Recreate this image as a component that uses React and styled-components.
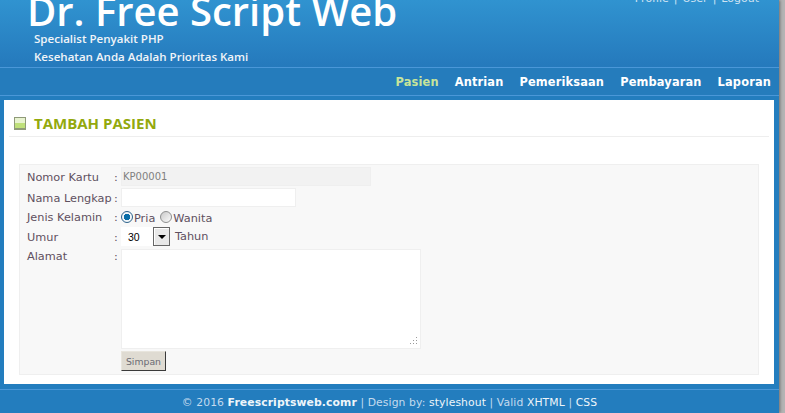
import React from "react";
import styled, { createGlobalStyle } from "styled-components";

const Global = createGlobalStyle`
  html, body { margin: 0; padding: 0; height: 413px; overflow: hidden; background: #b4b4b4; }
  body { font-family: "DejaVu Sans", Verdana, sans-serif; font-size: 11.3px; color: #5a4a5a; }
`;
const Page = styled.div`
  width: 779px; height: 413px; overflow: hidden; background: #237dbe;
  box-shadow: 1px 0 3px rgba(0,0,0,.4); display: flex; flex-direction: column;
`;
const Header = styled.header`
  height: 67px; flex: none; display: flex; justify-content: space-between;
  background: linear-gradient(#3093d0, #2579bc);
  border-bottom: 1px solid #4a97d8; overflow: hidden;
`;
const Brand = styled.div`
  padding-left: 27px; display: flex; flex-direction: column;
`;
const Title = styled.h1`
  margin: -9px 0 0; font: 600 40px/39px "Open Sans", sans-serif; color: #fff; white-space: nowrap;
`;
const Slogan = styled.div`
  margin-left: 7px; font: 600 11.55px/18px "Open Sans", sans-serif; color: #f0f4f8; white-space: nowrap;
`;
const TopLinks = styled.div`
  margin-top: -8px; padding-right: 20px; font-size: 11px; line-height: 14px; color: #cfe3f3; white-space: pre; word-spacing: -1px;
`;
const Nav = styled.nav`
  height: 27px; flex: none; display: flex; justify-content: flex-end; align-items: center; gap: 16px;
  padding-right: 8px; background: #257cbc; border-bottom: 1px solid #4a97d8;
`;
const NavLink = styled.a`
  font-weight: bold; font-size: 11.4px; letter-spacing: .15px; color: ${p => (p.$active ? "#c8e49a" : "#fff")};
`;
const Main = styled.main`
  margin: 4px 5px 0 4px; height: 284px; flex: none; background: #fff; padding: 0 5px; box-sizing: border-box;
  display: flex; flex-direction: column;
`;
const Heading = styled.h2`
  margin: 0; height: 37px; flex: none; box-sizing: border-box; display: flex; align-items: center; gap: 8px;
  padding: 10px 0 0 5px; border-bottom: 1px solid #eee;
  font: bold 15px "Open Sans", sans-serif; color: #93a90d; white-space: nowrap;
`;
const Bullet = styled.i`
  width: 12px; height: 13px; box-sizing: border-box; border: 1px solid #8f9a78; border-bottom-width: 2px;
  background: linear-gradient(#e8f3d0 50%, #bfe07a 50%);
`;
const Panel = styled.form`
  margin: 27px 10px 0; height: 211px; box-sizing: border-box; background: #f8f8f8; border: 1px solid #efefef;
  padding: 2px 0 0 7px; display: grid; grid-template-columns: 87px 7px 1fr; align-content: start;
  line-height: 14px;
`;
const Label = styled.label`
  align-self: start; padding-top: ${p => p.$pt ?? 4}px; color: #5f5060; white-space: nowrap;
`;
const Colon = styled.span`
  align-self: start; padding-top: ${p => p.$pt ?? 4}px; color: #5f5060;
`;
const Field = styled.div`
  display: flex; align-items: center; height: ${p => p.$h || 19}px; margin-bottom: ${p => p.$mb ?? 2}px;
`;
const TextBox = styled.div`
  width: ${p => p.$w}px; height: 19px; box-sizing: border-box; border: 1px solid #efefef; padding-left: 1px;
  background: ${p => (p.$off ? "#f2f2f2" : "#fff")}; color: #808080; font-size: 10px; line-height: 18px;
`;
const Radio = styled.span`
  width: 12px; height: 12px; box-sizing: border-box; border-radius: 50%; border: 1px solid ${p => (p.$on ? "#2c628b" : "#8e8f8f")};
  background: ${p => (p.$on ? "radial-gradient(circle, #0a6ea8 0 3px, #f2f6f9 3.5px)" : "linear-gradient(135deg, #c9c9c9, #fbfbfb)")};
  flex: none; margin: -2px 1px 0 ${p => p.$ml || 0}px;
`;
const Option = styled.span`
  margin-top: 1px; color: #5f5060;
`;
const Select = styled.div`
  width: 49px; height: 19px; display: flex; align-items: center; justify-content: space-between; padding-left: 7px; box-sizing: border-box;
  background: #fff; color: #000; font: 10.5px "Liberation Sans", sans-serif;
`;
const Arrow = styled.span`
  width: 17px; height: 19px; box-sizing: border-box; border: 1px solid #666; background: #e8e8e8;
  box-shadow: inset 1px 1px 0 #fff;
  display: flex; align-items: center; justify-content: center;
  &::before { content: ""; border: 4px solid transparent; border-top: 4px solid #000; border-bottom: 0; }
`;
const Unit = styled.span`
  margin-left: 5px; color: #5f5060;
`;
const TextArea = styled.div`
  width: 300px; height: 100px; box-sizing: border-box; background: #fff; border: 1px solid #efefef; position: relative;
`;
const Grip = styled.svg`
  position: absolute; right: 1px; bottom: 1px;
`;
const Save = styled.button`
  grid-column: 3; width: 45px; height: 20px; padding: 0; background: #dfdbd2; color: #6a6a72;
  border: 1px solid; border-color: #e8e5dd #3a3a3a #3a3a3a #e8e5dd; font: 9.3px "DejaVu Sans", sans-serif;
`;
const Footer = styled.footer`
  margin-top: 5px; flex: 1; border-top: 1px solid #4a97d8; display: flex; justify-content: center; align-items: center;
  padding: 2px 0 0 0; font-size: 10.8px; color: #c4dbee; white-space: pre; letter-spacing: .1px;
`;
const FootBold = styled.b`
  color: #eef5fa;
`;
const FootLink = styled.span`
  color: #eef5fa;
`;

export default function App() {
  return (
    <Page>
      <Global />
      <Header>
        <Brand>
          <Title>Dr. Free Script Web</Title>
          <Slogan>Specialist Penyakit PHP</Slogan>
          <Slogan>Kesehatan Anda Adalah Prioritas Kami</Slogan>
        </Brand>
        <TopLinks>Profile  |  User  |  Logout</TopLinks>
      </Header>
      <Nav>
        <NavLink $active>Pasien</NavLink>
        <NavLink>Antrian</NavLink>
        <NavLink>Pemeriksaan</NavLink>
        <NavLink>Pembayaran</NavLink>
        <NavLink>Laporan</NavLink>
      </Nav>
      <Main>
        <Heading><Bullet />TAMBAH PASIEN</Heading>
        <Panel>
          <Label>Nomor Kartu</Label><Colon>:</Colon>
          <Field><TextBox $w={250} $off>KP00001</TextBox></Field>
          <Label>Nama Lengkap</Label><Colon>:</Colon>
          <Field><TextBox $w={175} /></Field>
          <Label $pt={2}>Jenis Kelamin</Label><Colon $pt={2}>:</Colon>
          <Field $h={18} $mb={0}><Radio $on /><Option>Pria</Option><Radio $ml={5} /><Option>Wanita</Option></Field>
          <Label>Umur</Label><Colon>:</Colon>
          <Field $mb={3}><Select>30<Arrow /></Select><Unit>Tahun</Unit></Field>
          <Label $pt={1}>Alamat</Label><Colon $pt={1}>:</Colon>
          <Field $h={100}>
            <TextArea>
              <Grip width="11" height="11" viewBox="0 0 11 11" fill="#9a9a9a">
                <rect x="8" y="1" width="1" height="1" /><rect x="8" y="4" width="1" height="1" /><rect x="8" y="7" width="1" height="1" />
                <rect x="5" y="4" width="1" height="1" /><rect x="5" y="7" width="1" height="1" /><rect x="2" y="7" width="1" height="1" />
              </Grip>
            </TextArea>
          </Field>
          <Save type="button">Simpan</Save>
        </Panel>
      </Main>
      <Footer>© 2016 <FootBold>Freescriptsweb.comr</FootBold> | Design by: <FootLink>styleshout</FootLink> | Valid <FootLink>XHTML</FootLink> | <FootLink>CSS</FootLink></Footer>
    </Page>
  );
}
